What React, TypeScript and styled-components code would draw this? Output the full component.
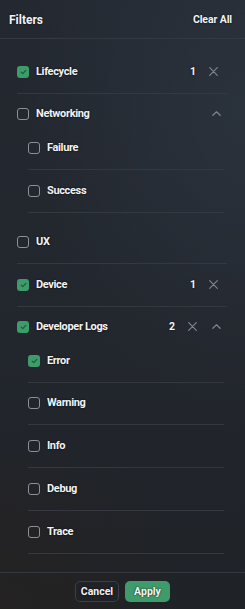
import React from "react";
import styled, { createGlobalStyle } from "styled-components";

const Global = createGlobalStyle`
  html, body { margin: 0; padding: 0; height: 100%; }
  body { background: #202328; }
  #root { height: 100%; }
  * { box-sizing: border-box; }
`;

const Panel = styled.div`
  height: 100vh;
  display: flex;
  flex-direction: column;
  font-family: Roboto, "Liberation Sans", sans-serif;
  color: #f2f3f5;
  text-shadow: 0 0 2px rgba(0, 0, 0, 0.85);
  background:
    radial-gradient(ellipse 90% 50% at 100% 18%, rgba(48, 58, 70, 0.55), rgba(48, 58, 70, 0) 100%),
    radial-gradient(ellipse 80% 30% at 0% 100%, rgba(40, 34, 30, 0.6), rgba(40, 34, 30, 0) 100%),
    linear-gradient(180deg, #242931 0%, #22262d 60%, #1f2227 100%);
`;

const Header = styled.div`
  height: 39px;
  flex: none;
  display: flex;
  align-items: center;
  justify-content: space-between;
  padding: 1px 13px 0 9px;
  border-bottom: 1px solid #343941;
`;

const Title = styled.div`
  font-size: 12px;
  font-weight: 700;
`;

const ClearAll = styled.button`
  background: none;
  border: none;
  padding: 0;
  color: #f2f3f5;
  font-family: inherit;
  font-size: 10.5px;
  font-weight: 700;
  letter-spacing: -0.1px;
  text-shadow: inherit;
`;

const List = styled.div`
  flex: 1;
  overflow: hidden;
  padding: 12px 18px 0 17px;
`;

const Item = styled.div<{ $open?: boolean }>`
  border-bottom: ${(p) => (p.$open ? "none" : "1px solid #343941")};
  padding-bottom: ${(p) => (p.$open ? "8.5px" : "0")};
`;

const ItemRow = styled.div<{ $open?: boolean }>`
  height: ${(p) => (p.$open ? "33.25px" : "41.75px")};
  display: flex;
  align-items: ${(p) => (p.$open ? "flex-start" : "center")};
  padding: ${(p) => (p.$open ? "11px 4px 0 0" : "0 4px 0 0")};
  gap: 7px;
`;

const SubList = styled.div`
  margin: 0 3px 0 11px;
`;

const SubRow = styled.div`
  height: 42.75px;
  display: flex;
  align-items: center;
  gap: 7px;
  border-bottom: 1px solid #343941;
`;

const Box = styled.span<{ $checked?: boolean }>`
  width: 12px;
  height: 12px;
  flex: none;
  border-radius: 3px;
  display: flex;
  align-items: center;
  justify-content: center;
  background: ${(p) => (p.$checked ? "#3e9c6b" : "transparent")};
  border: ${(p) => (p.$checked ? "none" : "1.5px solid #8a9098")};
`;

const Label = styled.span`
  font-size: 11px;
  font-weight: 700;
  line-height: 18px;
  letter-spacing: -0.35px;
  flex: 1;
  white-space: nowrap;
`;

const Count = styled.span`
  font-size: 10.5px;
  font-weight: 700;
  line-height: 18px;
`;

const IconBtn = styled.span<{ $w: number }>`
  width: ${(p) => p.$w}px;
  height: 18px;
  flex: none;
  display: flex;
  align-items: center;
  justify-content: center;
`;

const Right = styled.div`
  display: flex;
  align-items: center;
  gap: 7px;
`;

const Footer = styled.div`
  flex: none;
  border-top: 1px solid #343941;
  padding: 8px 0 7px;
  display: flex;
  justify-content: center;
  gap: 6px;
`;

const Btn = styled.button<{ $primary?: boolean }>`
  height: 21px;
  padding: 0;
  width: ${(p) => (p.$primary ? "45px" : "44px")};
  border-radius: 5px;
  font-family: inherit;
  font-size: 10.5px;
  font-weight: 700;
  color: #f2f3f5;
  text-shadow: inherit;
  background: ${(p) => (p.$primary ? "#3f9b6c" : "#1f2227")};
  border: ${(p) => (p.$primary ? "none" : "1px solid #3a3f48")};
`;

const Check = () => (
  <svg width="7" height="6" viewBox="0 0 7 6" fill="none">
    <path d="M1.2 3.1 L2.8 4.6 L5.8 1.4" stroke="#1f5a3b" strokeWidth="1.2" strokeLinecap="round" strokeLinejoin="round" />
  </svg>
);

const XIcon = () => (
  <svg width="9" height="9" viewBox="0 0 9 9" fill="none">
    <path d="M0.7 0.7 L8.3 8.3 M8.3 0.7 L0.7 8.3" stroke="#7e858e" strokeWidth="1.2" strokeLinecap="round" />
  </svg>
);

const ChevronUp = () => (
  <svg width="9" height="5" viewBox="0 0 9 5" fill="none">
    <path d="M0.8 4.3 L4.5 0.8 L8.2 4.3" stroke="#7e858e" strokeWidth="1.2" strokeLinecap="round" strokeLinejoin="round" />
  </svg>
);

type Sub = { label: string; checked?: boolean };
type Group = { label: string; checked?: boolean; count?: number; subs?: Sub[] };

const groups: Group[] = [
  { label: "Lifecycle", checked: true, count: 1 },
  { label: "Networking", subs: [{ label: "Failure" }, { label: "Success" }] },
  { label: "UX" },
  { label: "Device", checked: true, count: 1 },
  {
    label: "Developer Logs",
    checked: true,
    count: 2,
    subs: [
      { label: "Error", checked: true },
      { label: "Warning" },
      { label: "Info" },
      { label: "Debug" },
      { label: "Trace" },
    ],
  },
];

export default function App() {
  return (
    <>
      <Global />
      <Panel>
        <Header>
          <Title>Filters</Title>
          <ClearAll>Clear All</ClearAll>
        </Header>
        <List>
          {groups.map((g) => {
            const open = !!g.subs;
            return (
              <Item key={g.label} $open={open}>
                <ItemRow $open={open}>
                  <IconBtn $w={12}>
                    <Box $checked={g.checked}>{g.checked && <Check />}</Box>
                  </IconBtn>
                  <Label>{g.label}</Label>
                  <Right>
                    {g.count !== undefined && <Count>{g.count}</Count>}
                    {g.count !== undefined && (
                      <IconBtn $w={20}>
                        <XIcon />
                      </IconBtn>
                    )}
                    {open && (
                      <IconBtn $w={14}>
                        <ChevronUp />
                      </IconBtn>
                    )}
                  </Right>
                </ItemRow>
                {g.subs && (
                  <SubList>
                    {g.subs.map((s) => (
                      <SubRow key={s.label}>
                        <Box $checked={s.checked}>{s.checked && <Check />}</Box>
                        <Label>{s.label}</Label>
                      </SubRow>
                    ))}
                  </SubList>
                )}
              </Item>
            );
          })}
        </List>
        <Footer>
          <Btn>Cancel</Btn>
          <Btn $primary>Apply</Btn>
        </Footer>
      </Panel>
    </>
  );
}
